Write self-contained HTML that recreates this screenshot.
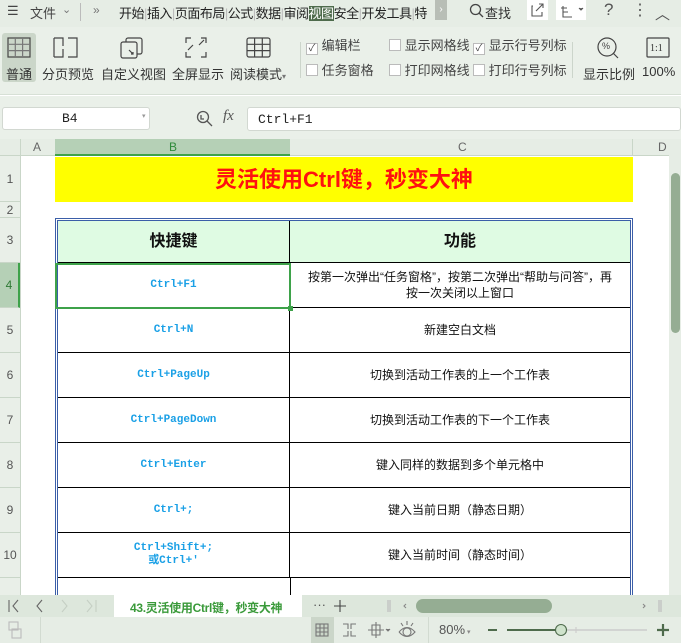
<!DOCTYPE html>
<html><head><meta charset="utf-8"><style>
*{margin:0;padding:0;box-sizing:border-box}
body{width:681px;height:643px;overflow:hidden;position:relative;background:#fff;font-family:"Liberation Sans","Noto Sans CJK SC",sans-serif;font-size:12px;color:#333}
.a{position:absolute}
.t{white-space:nowrap}
.rh{position:absolute;left:0;width:20px;text-align:center;color:#555;font-size:12px;border-bottom:1px solid #c9d6c8;background:#e9efe8;display:flex;align-items:center;justify-content:center}
.row{position:absolute;left:58px;width:572px;border-bottom:1px solid #000;display:flex}
.row .k{width:232px;text-align:center;color:#1aa0e6;font-family:"Liberation Mono",monospace;font-weight:bold;font-size:11px;display:flex;align-items:center;justify-content:center;border-right:1px solid #000;line-height:13px}
.row .f{flex:1;text-align:center;font-size:12px;color:#111;display:flex;align-items:center;justify-content:center;line-height:16px}
.cb{display:inline-block;width:12px;height:12px;border:1px solid #bbb;background:#fff;font-size:10px;line-height:10px;vertical-align:-1px;text-align:center;color:#444}
.lb{position:absolute;top:64px;font-size:13px;color:#333;white-space:nowrap}
</style></head><body>
<!-- top tab bar -->
<div class="a" style="left:0;top:0;width:681px;height:27px;background:#e6ede5"></div>
<div class="a t" style="left:7px;top:3px;font-size:13px;color:#444">☰</div>
<div class="a t" style="left:30px;top:3px;font-size:13px;color:#444">文件</div>
<div class="a t" style="left:62px;top:3px;font-size:11px;color:#777">⌄</div>
<div class="a" style="left:80px;top:3px;width:1px;height:18px;background:#bbb"></div>
<div class="a t" style="left:93px;top:3px;color:#777">»</div>
<div class="a t" style="left:119px;top:3px;font-size:13px;color:#222;letter-spacing:-0.5px">开始<span style="color:#bbb">|</span>插入<span style="color:#bbb">|</span>页面布局<span style="color:#bbb">|</span>公式<span style="color:#bbb">|</span>数据<span style="color:#bbb">|</span>审阅<span style="background:#4e6b4c;color:#fff">视图</span>安全<span style="color:#bbb">|</span>开发工具<span style="color:#bbb">|</span>特</div>
<div class="a" style="left:435px;top:0;width:12px;height:20px;background:#b8beb6;color:#fff;font-size:10px;text-align:center;line-height:20px">›</div>
<svg class="a" style="left:469px;top:3px" width="16" height="16" fill="none" stroke="#444" stroke-width="1.3"><circle cx="6.5" cy="6.5" r="5"/><path d="M10 10l4 4"/></svg>
<div class="a t" style="left:485px;top:3px;font-size:13px;color:#333">查找</div>
<div class="a" style="left:527px;top:0;width:21px;height:20px;background:#fff"></div>
<div class="a" style="left:556px;top:0;width:30px;height:20px;background:#fff"></div>
<svg class="a" style="left:527px;top:0" width="60" height="20" fill="none" stroke="#555" stroke-width="1.1"><path d="M6 6h-1v10h10v-4M9 11l7-7M12 4h4v4"/><path d="M36 6v11h9M34 8h6M36 12h5"/><path d="M52 8l2 2 2-2" fill="#777"/></svg>
<div class="a t" style="left:604px;top:0px;font-size:17px;color:#555">?</div>
<div class="a t" style="left:632px;top:0px;font-size:16px;color:#555">⋮</div>
<div class="a t" style="left:655px;top:3px;font-size:15px;color:#555">︿</div>
<!-- ribbon -->
<div class="a" style="left:0;top:27px;width:681px;height:68px;background:#eaf0e9;border-bottom:1px solid #d7e0d6"></div>
<div class="a" style="left:2px;top:33px;width:34px;height:49px;background:#cbd6c9;border-radius:3px"></div>
<svg class="a" style="left:0;top:35px" width="681" height="30" fill="none" stroke="#444" stroke-width="1.2">
<rect x="8" y="3" width="22" height="19"/><path d="M8 9.3h22M8 15.6h22M15.3 3v19M22.6 3v19" stroke="#777"/>
<path d="M54 3h9v8M68 3h9v8M54 22h9v-8M68 22h9v-8M54 3v19M77 3v19"/>
<rect x="126" y="3" width="16" height="16" rx="2"/><rect x="121" y="7" width="16" height="16" rx="2" fill="#eaf0e9"/><path d="M129 15l4 4M131 19h2v-2"/>
<path d="M191 3h-5v5M201 3h5v5M191 22h-5v-5M201 22h5v-5M193 10l-5 5M199 10l5-5"/>
<rect x="247" y="3" width="23" height="19" rx="2"/><path d="M247 9.3h23M247 15.6h23M254.6 3v19M262.3 3v19"/>
<circle cx="607" cy="12" r="9"/><path d="M613 18l5 5"/>
<rect x="647" y="3" width="22" height="19" rx="1"/>
</svg>
<div class="a t" style="left:602px;top:41px;font-size:9px;color:#444">%</div>
<div class="a t" style="left:650px;top:43px;font-size:10px;color:#333;font-family:'Liberation Serif',serif">1:1</div>
<div class="lb" style="left:6px">普通</div>
<div class="lb" style="left:42px">分页预览</div>
<div class="lb" style="left:101px">自定义视图</div>
<div class="lb" style="left:172px">全屏显示</div>
<div class="lb" style="left:230px">阅读模式<span style="font-size:8px;color:#777">▾</span></div>
<div class="a" style="left:300px;top:42px;width:1px;height:36px;background:#ccd5cb"></div>
<div class="a" style="left:572px;top:42px;width:1px;height:36px;background:#ccd5cb"></div>
<div class="a t" style="left:306px;top:33px;font-size:13px;color:#444;line-height:25px"><span class="cb">✓</span> 编辑栏<br><span class="cb"></span> 任务窗格</div>
<div class="a t" style="left:389px;top:33px;font-size:13px;color:#444;line-height:25px"><span class="cb"></span> 显示网格线<br><span class="cb"></span> 打印网格线</div>
<div class="a t" style="left:473px;top:33px;font-size:13px;color:#444;line-height:25px"><span class="cb">✓</span> 显示行号列标<br><span class="cb"></span> 打印行号列标</div>
<div class="lb" style="left:583px">显示比例</div>
<div class="lb" style="left:642px">100%</div>
<!-- formula bar -->
<div class="a" style="left:0;top:96px;width:681px;height:43px;background:#eaf0e9"></div>
<div class="a" style="left:2px;top:107px;width:148px;height:23px;background:#fff;border:1px solid #d2d8d1;border-radius:3px"></div>
<div class="a t" style="left:62px;top:111px;font-family:'Liberation Mono',monospace;font-size:13px;color:#222">B4</div>
<div class="a t" style="left:142px;top:112px;font-size:7px;color:#999">▾</div>
<svg class="a" style="left:196px;top:110px" width="18" height="18" fill="none" stroke="#555" stroke-width="1.3"><circle cx="7" cy="7" r="5.5"/><path d="M11 11l5 5M5 5v4h3"/></svg>
<div class="a t" style="left:223px;top:108px;font-size:15px;color:#555;font-style:italic;font-family:'Liberation Serif',serif">fx</div>
<div class="a" style="left:247px;top:107px;width:434px;height:24px;background:#fff;border:1px solid #d2d8d1;border-radius:3px"></div>
<div class="a t" style="left:258px;top:112px;font-family:'Liberation Mono',monospace;font-size:13px;color:#222">Ctrl+F1</div>
<!-- column header -->
<div class="a" style="left:0;top:139px;width:669px;height:17px;background:#e6ede5;border-bottom:1px solid #c9d6c8"></div>
<div class="a" style="left:55px;top:139px;width:235px;height:17px;background:#b5d0b6;border-bottom:2px solid #3ea24a"></div>
<div class="a t" style="left:33px;top:140px;color:#666">A</div>
<div class="a t" style="left:169px;top:140px;color:#2f8a3a">B</div>
<div class="a t" style="left:458px;top:140px;color:#666">C</div>
<div class="a t" style="left:658px;top:140px;color:#666">D</div>
<div class="a" style="left:20px;top:139px;width:1px;height:17px;background:#c9d6c8"></div>
<div class="a" style="left:632px;top:139px;width:1px;height:17px;background:#c9d6c8"></div>
<!-- row headers -->
<div class="a" style="left:0;top:156px;width:21px;height:439px;background:#e9efe8;border-right:1px solid #c9d6c8"></div>
<div class="rh" style="top:156px;height:46px">1</div>
<div class="rh" style="top:202px;height:16px">2</div>
<div class="rh" style="top:218px;height:45px">3</div>
<div class="rh" style="top:263px;height:45px;background:#b5d0b6;color:#2f7a35;border-right:2px solid #3ea24a">4</div>
<div class="rh" style="top:308px;height:45px">5</div>
<div class="rh" style="top:353px;height:45px">6</div>
<div class="rh" style="top:398px;height:45px">7</div>
<div class="rh" style="top:443px;height:45px">8</div>
<div class="rh" style="top:488px;height:45px">9</div>
<div class="rh" style="top:533px;height:45px">10</div>
<!-- title -->
<div class="a" style="left:55px;top:157px;width:578px;height:45px;background:#ffff00;color:#ff1010;font-size:22px;font-weight:bold;text-align:center;line-height:45px">灵活使用Ctrl键，秒变大神</div>
<!-- table -->
<div class="a" style="left:55px;top:218px;width:578px;height:377px;border:3px double #3b5ea8;border-bottom:none"></div>
<div class="row" style="top:221px;height:42px;background:#dffbe3"><div class="k" style="color:#111;font-family:'Liberation Sans','Noto Sans CJK SC',sans-serif;font-size:16px">快捷键</div><div class="f" style="font-size:16px;font-weight:bold">功能</div></div>
<div class="row" style="top:263px;height:45px"><div class="k">Ctrl+F1</div><div class="f">按第一次弹出“任务窗格”，按第二次弹出“帮助与问答”，再<br>按一次关闭以上窗口</div></div>
<div class="row" style="top:308px;height:45px"><div class="k">Ctrl+N</div><div class="f">新建空白文档</div></div>
<div class="row" style="top:353px;height:45px"><div class="k">Ctrl+PageUp</div><div class="f">切换到活动工作表的上一个工作表</div></div>
<div class="row" style="top:398px;height:45px"><div class="k">Ctrl+PageDown</div><div class="f">切换到活动工作表的下一个工作表</div></div>
<div class="row" style="top:443px;height:45px"><div class="k">Ctrl+Enter</div><div class="f">键入同样的数据到多个单元格中</div></div>
<div class="row" style="top:488px;height:45px"><div class="k">Ctrl+;</div><div class="f">键入当前日期（静态日期）</div></div>
<div class="row" style="top:533px;height:45px"><div class="k" style="font-family:'Liberation Mono','Noto Sans CJK SC',monospace">Ctrl+Shift+;<br>或Ctrl+'</div><div class="f">键入当前时间（静态时间）</div></div>
<div class="a" style="left:290px;top:578px;width:1px;height:17px;background:#000"></div>
<!-- selection -->
<div class="a" style="left:55px;top:263px;width:236px;height:46px;border:2px solid #3ea24a"></div>
<div class="a" style="left:288px;top:306px;width:5px;height:5px;background:#3ea24a"></div>
<!-- vertical scrollbar -->
<div class="a" style="left:669px;top:139px;width:12px;height:456px;background:#e6ede5"></div>
<div class="a" style="left:671px;top:173px;width:9px;height:160px;background:#95ad93;border-radius:5px"></div>
<!-- sheet tabs -->
<div class="a" style="left:0;top:595px;width:681px;height:22px;background:#dde7dc"></div>
<svg class="a" style="left:0;top:595px" width="681" height="22" fill="none" stroke="#666" stroke-width="1.1">
<path d="M9 5v12M18 5l-5 6 5 6M42 5l-5 6 5 6"/>
<path d="M62 5l5 6-5 6M87 5l5 6-5 6M96 5v12" stroke="#c5cfc4"/>
<path d="M340 5v12M334 11h12" stroke="#444"/>
<path d="M388 5v12M390 5v12M659 5v12M661 5v12" stroke="#bbb"/>
<path d="M406 9l-2 2 2 2M643 9l2 2-2 2" stroke="#888"/>
</svg>
<div class="a" style="left:114px;top:595px;width:188px;height:22px;background:#fff"></div>
<div class="a t" style="left:130px;top:599px;font-size:12px;font-weight:bold;color:#3a9a3a;letter-spacing:-0.3px">43.灵活使用Ctrl键，秒变大神</div>
<div class="a t" style="left:313px;top:597px;font-size:13px;color:#555">···</div>
<div class="a" style="left:416px;top:599px;width:136px;height:14px;background:#95ad93;border-radius:7px"></div>
<!-- status bar -->
<div class="a" style="left:0;top:617px;width:681px;height:26px;background:#e6ede5"></div>
<div class="a" style="left:40px;top:617px;width:1px;height:26px;background:#d2dbd1"></div>
<div class="a" style="left:428px;top:617px;width:1px;height:26px;background:#d2dbd1"></div>
<div class="a" style="left:311px;top:617px;width:23px;height:26px;background:#cbd6c9"></div>
<svg class="a" style="left:0;top:617px" width="681" height="26" fill="none" stroke="#777" stroke-width="1.1">
<rect x="9" y="5" width="9" height="8" stroke="#bbb"/><rect x="12" y="12" width="9" height="9" stroke="#bbb"/>
<rect x="316" y="7" width="12" height="12"/><path d="M316 11h12M316 15h12M320 7v12M324 7v12"/>
<path d="M343 7h5v5M356 7h-5v5M343 19h5v-5M356 19h-5v-5"/>
<path d="M372 8h8v10h-8zM368 13h16M376 5v16"/><path d="M386 12l2 2 2-2" fill="#777"/>
<circle cx="407" cy="15" r="4"/><path d="M399 15q8-9 16 0q-8 9-16 0M401 6l2 3M407 4v4M413 6l-2 3"/>
<path d="M488 13h9" stroke="#4e6b4c" stroke-width="2"/>
<path d="M507 13h54" stroke="#4e6b4c" stroke-width="2"/><path d="M561 13h86" stroke="#ccc" stroke-width="1.5"/><path d="M576 10v6" stroke="#ccc"/>
<circle cx="561" cy="13" r="5.5" fill="#cfe3cc" stroke="#4e6b4c"/>
<path d="M657 13h12M663 7v12" stroke="#4e6b4c" stroke-width="2.2"/>
</svg>
<div class="a t" style="left:439px;top:622px;font-size:13px;color:#555">80%<span style="font-size:7px;color:#888"> ▾</span></div>
</body></html>
